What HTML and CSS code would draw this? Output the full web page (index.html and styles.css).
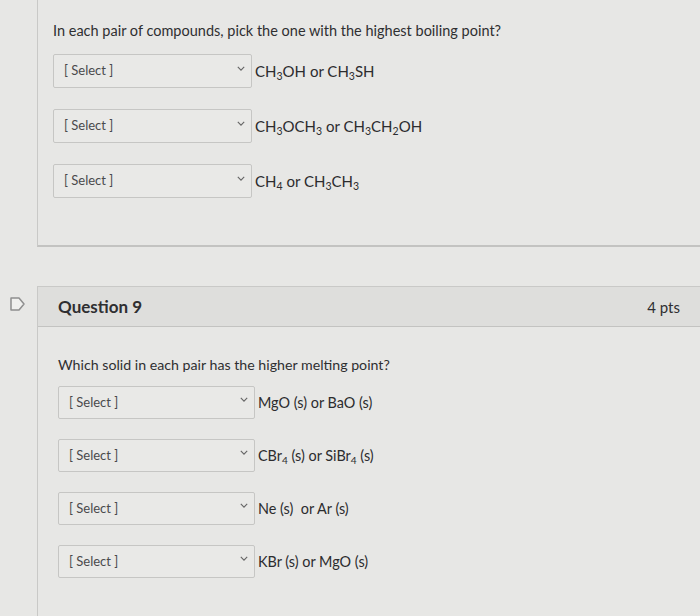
FILE: index.html
```html
<!DOCTYPE html>
<html>
<head>
<meta charset="utf-8">
<link rel="stylesheet" href="styles.css">
</head>
<body>
<div class="page">
  <section class="prev-panel">
    <p class="prompt">In each pair of compounds, pick the one with the highest boiling point?</p>
    <div class="rows rows-a">
      <div class="row">
        <div class="select"><span>[ Select ]</span><svg class="chev" viewBox="0 0 10 6" width="8" height="5"><path d="M1 1 L5 5 L9 1" fill="none" stroke="#666" stroke-width="1.4"/></svg></div>
        <span class="label">CH<sub>3</sub>OH or CH<sub>3</sub>SH</span>
      </div>
      <div class="row">
        <div class="select"><span>[ Select ]</span><svg class="chev" viewBox="0 0 10 6" width="8" height="5"><path d="M1 1 L5 5 L9 1" fill="none" stroke="#666" stroke-width="1.4"/></svg></div>
        <span class="label">CH<sub>3</sub>OCH<sub>3</sub> or CH<sub>3</sub>CH<sub>2</sub>OH</span>
      </div>
      <div class="row">
        <div class="select"><span>[ Select ]</span><svg class="chev" viewBox="0 0 10 6" width="8" height="5"><path d="M1 1 L5 5 L9 1" fill="none" stroke="#666" stroke-width="1.4"/></svg></div>
        <span class="label">CH<sub>4</sub> or CH<sub>3</sub>CH<sub>3</sub></span>
      </div>
    </div>
  </section>

  <div class="q-wrap">
    <div class="flag">
      <svg viewBox="0 0 15 14" width="15" height="14"><path d="M1 1 H9 L14 7 L9 13 H1 Z" fill="#f0f0ee" stroke="#8f8f8f" stroke-width="1.5" stroke-linejoin="round"/></svg>
    </div>
    <section class="question">
      <header class="q-head">
        <h2>Question 9</h2>
        <span class="pts">4 pts</span>
      </header>
      <div class="q-body">
        <p class="prompt prompt-b">Which solid in each pair has the higher melting point?</p>
        <div class="rows rows-b">
          <div class="row">
            <div class="select"><span>[ Select ]</span><svg class="chev" viewBox="0 0 10 6" width="8" height="5"><path d="M1 1 L5 5 L9 1" fill="none" stroke="#666" stroke-width="1.4"/></svg></div>
            <span class="label">MgO (s) or BaO (s)</span>
          </div>
          <div class="row">
            <div class="select"><span>[ Select ]</span><svg class="chev" viewBox="0 0 10 6" width="8" height="5"><path d="M1 1 L5 5 L9 1" fill="none" stroke="#666" stroke-width="1.4"/></svg></div>
            <span class="label">CBr<sub>4</sub> (s) or SiBr<sub>4</sub> (s)</span>
          </div>
          <div class="row">
            <div class="select"><span>[ Select ]</span><svg class="chev" viewBox="0 0 10 6" width="8" height="5"><path d="M1 1 L5 5 L9 1" fill="none" stroke="#666" stroke-width="1.4"/></svg></div>
            <span class="label">Ne (s)&nbsp; or Ar (s)</span>
          </div>
          <div class="row">
            <div class="select"><span>[ Select ]</span><svg class="chev" viewBox="0 0 10 6" width="8" height="5"><path d="M1 1 L5 5 L9 1" fill="none" stroke="#666" stroke-width="1.4"/></svg></div>
            <span class="label">KBr (s) or MgO (s)</span>
          </div>
        </div>
      </div>
    </section>
  </div>
</div>
</body>
</html>
```

FILE: styles.css
```css
* { box-sizing: border-box; }
html, body {
  margin: 0;
  padding: 0;
  background: #e7e7e5;
  font-family: Lato, "Open Sans", "Liberation Sans", sans-serif;
  color: #2f2f31;
  overflow: hidden;
}
.page {
  width: 700px;
  height: 616px;
  overflow: hidden;
}
.prev-panel {
  margin-left: 37px;
  height: 247px;
  border-left: 1px solid #c9c9c7;
  border-bottom: 2px solid #c3c3c1;
  padding: 21px 0 0 15px;
}
.prompt {
  margin: 0;
  font-size: 14.5px;
  line-height: 20px;
}
.rows {
  display: flex;
  flex-direction: column;
}
.rows-a {
  margin-top: 13px;
  gap: 21px;
}
.row {
  display: flex;
  align-items: center;
}
.select {
  width: 199px;
  height: 34px;
  border: 1px solid #c6c6c4;
  border-radius: 2px;
  background: #e9e9e7;
  display: flex;
  align-items: center;
  justify-content: space-between;
  padding: 0 6px 0 10px;
  font-size: 13px;
  color: #4a4a4c;
}
.select span { margin-top: -2px; }
.chev { margin-top: -6px; }
.label {
  margin-left: 3px;
  font-size: 15px;
  color: #2c2c2e;
}
sub {
  font-size: 0.7em;
  vertical-align: -0.25em;
  line-height: 0;
}
.q-wrap {
  display: flex;
  margin-top: 39px;
}
.flag {
  width: 37px;
  padding: 9px 0 0 10px;
}
.question {
  flex: 1;
  border-left: 1px solid #c9c9c7;
  border-top: 1px solid #c9c9c7;
  height: 330px;
}
.q-head {
  height: 40px;
  background: #dededc;
  border-bottom: 1px solid #c3c3c1;
  display: flex;
  align-items: center;
  justify-content: space-between;
  padding: 0 20px 0 20px;
}
.q-head h2 {
  margin: 0;
  font-size: 17px;
  font-weight: 700;
  color: #2f2f31;
}
.pts {
  font-size: 15px;
  color: #2f2f31;
}
.q-body {
  padding: 28px 0 0 20px;
}
.prompt-b {
  font-size: 14.2px;
}
.rows-b {
  margin-top: 11px;
  gap: 20px;
}
.rows-b .select {
  height: 33px;
  width: 197px;
}
.rows-b .label {
  font-size: 14.4px;
}
```
